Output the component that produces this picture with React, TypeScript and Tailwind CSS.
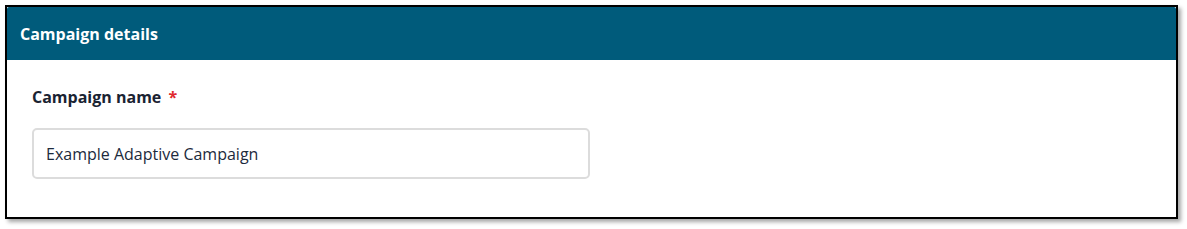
export default function App() {
  return (
    <div className="w-[1187px] h-[229px] bg-white pl-[5px] pt-[5px] font-['Open_Sans',sans-serif]">
      <div className="w-[1173px] h-[214px] border-2 border-black bg-white shadow-[3px_3px_4px_rgba(0,0,0,0.35)] flex flex-col">
        <div className="h-[53px] bg-[#005b7b] flex items-center pl-[13px] rounded-tl-[2px] rounded-tr-[2px]">
          <span className="text-white font-bold text-[16px]">Campaign details</span>
        </div>
        <div className="pl-[25px] pt-[26px]">
          <label className="block text-[16px] font-bold text-[#1a2332] leading-[22px]">
            Campaign name <span className="text-[#e0282e] ml-[3px]">*</span>
          </label>
          <input
            className="mt-[20px] w-[558px] h-[51px] border-2 border-[#dcdcdc] rounded-[5px] px-[12px] text-[16px] text-[#1c2a3c] outline-none"
            defaultValue="Example Adaptive Campaign"
          />
        </div>
      </div>
    </div>
  );
}
